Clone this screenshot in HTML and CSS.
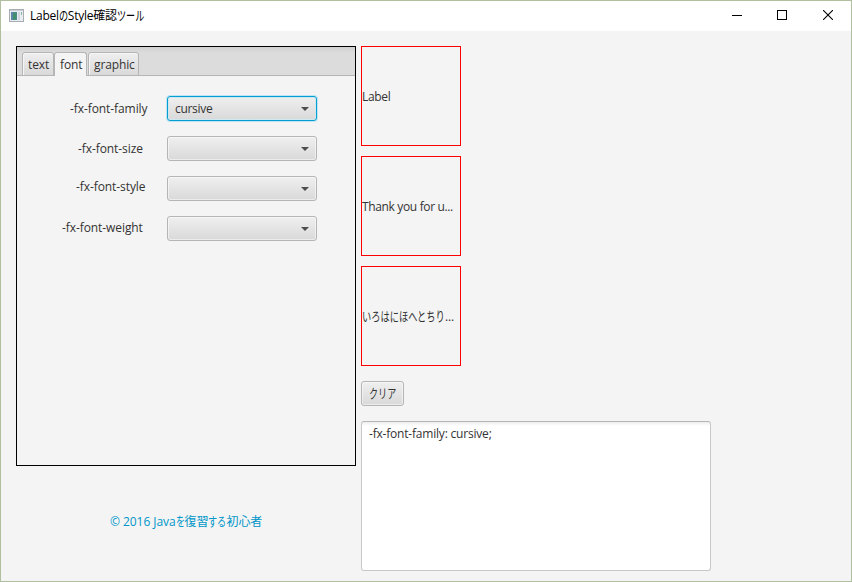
FILE: index.html
```html
<!DOCTYPE html>
<html lang="ja">
<head>
    <meta charset="UTF-8">
    <title>LabelのStyle確認ツール</title>
    <link rel="stylesheet" href="styles.css">
</head>
<body>
    <div class="window">
        <header class="titlebar">
            <svg class="app-icon" width="15" height="13" viewBox="0 0 15 13">
                <rect x="0.5" y="0.5" width="14" height="12" fill="#e9edf2" stroke="#a9adb3"/>
                <rect x="1" y="1" width="13" height="1" fill="#c9ced6"/>
                <rect x="2" y="3" width="6" height="8" fill="#4a8a85"/>
                <rect x="2" y="3" width="2" height="8" fill="#5b86a8"/>
                <rect x="4" y="5" width="3" height="5" fill="#3f8f6c"/>
                <rect x="9" y="3" width="2" height="8" fill="#cfd6de"/>
                <rect x="12" y="3" width="1" height="3" fill="#8fb5a5"/>
            </svg>
            <h1 class="title">Label<span class="kana k1">の</span>Style確認<span class="kana k3">ツール</span></h1>
            <div class="controls">
                <svg width="10" height="10" viewBox="0 0 10 10"><path d="M0 5.5H10" stroke="#000"/></svg>
                <svg width="10" height="10" viewBox="0 0 10 10"><rect x="0.5" y="0.5" width="9" height="9" fill="none" stroke="#000"/></svg>
                <svg width="10" height="10" viewBox="0 0 10 10"><path d="M0 0L10 10M10 0L0 10" stroke="#000" stroke-width="1.1"/></svg>
            </div>
        </header>
        <main class="content">
            <section class="left">
                <div class="panel">
                    <nav class="tabs">
                        <div class="tab tab-text"><span>text</span></div>
                        <div class="tab tab-font active"><span>font</span></div>
                        <div class="tab tab-graphic"><span>graphic</span></div>
                    </nav>
                    <div class="form">
                        <div class="row family">
                            <label>-fx-font-family</label>
                            <div class="combo focused"><span>cursive</span><i class="arrow"></i></div>
                        </div>
                        <div class="row size">
                            <label>-fx-font-size</label>
                            <div class="combo"><i class="arrow"></i></div>
                        </div>
                        <div class="row style">
                            <label>-fx-font-style</label>
                            <div class="combo"><i class="arrow"></i></div>
                        </div>
                        <div class="row weight">
                            <label>-fx-font-weight</label>
                            <div class="combo"><i class="arrow"></i></div>
                        </div>
                    </div>
                </div>
                <a class="copyright">© 2016 Java<span class="kana k1">を</span>復習<span class="kana k2">する</span>初心者</a>
            </section>
            <section class="right">
                <div class="preview label-box">Label</div>
                <div class="preview thanks-box">Thank you for u...</div>
                <div class="preview iroha-box"><span class="kana k9">いろはにほへとちり</span>...</div>
                <button class="clear"><span class="kana k3">クリア</span></button>
                <div class="output">-fx-font-family: cursive;</div>
            </section>
        </main>
    </div>
</body>
</html>
```
FILE: styles.css
```css
* {
    box-sizing: border-box;
}
body {
    margin: 0;
    font-family: "Open Sans", "Noto Sans CJK JP", sans-serif;
    font-size: 12px;
    line-height: 16px;
    letter-spacing: -0.12px;
    color: #333;
}
.window {
    width: 852px;
    height: 582px;
    border: 1px solid #b0bf9e;
    background: #f4f4f4;
    overflow: hidden;
}
/* kana are set narrow, kanji keep the full width */
.kana {
    display: inline-block;
    font-size: 13px;
    letter-spacing: 0;
    line-height: 16px;
    vertical-align: bottom;
    white-space: nowrap;
    transform: translateY(-1px) scaleX(0.7);
    transform-origin: left;
}
.k1 {
    width: 9px;
}
.k2 {
    width: 18px;
}
.k3 {
    width: 27px;
}
.k9 {
    width: 83px;
    transform: translateY(-1px) scaleX(0.71);
}
.titlebar {
    display: flex;
    align-items: center;
    height: 30px;
    padding: 0 18px 2px 8px;
    background: #fff;
    color: #000;
}
.title {
    margin: 2px 0 0 6px;
    font-size: 12px;
    line-height: 16px;
    font-weight: normal;
    letter-spacing: -0.25px;
    white-space: nowrap;
}
.controls {
    display: flex;
    gap: 36px;
    margin-left: auto;
}
.controls svg {
    display: block;
}
.controls svg:first-child {
    margin-right: -1px;
}
.content {
    display: flex;
    gap: 5px;
    padding: 15px;
}
.left {
    width: 340px;
}
.panel {
    height: 420px;
    border: 1px solid #000;
}
.tabs {
    display: flex;
    align-items: flex-end;
    height: 29px;
    padding-left: 5px;
    background: linear-gradient(#d0d0d0, #dcdcdc 6px);
    box-shadow: inset 0 -1px #b5b5b5;
}
.tab {
    display: flex;
    height: 24px;
    padding: 4px 0 0 5px;
    border: 1px solid #b5b5b5;
    border-radius: 3px 3px 0 0;
    background: linear-gradient(#efefef, #d9d9d9);
    box-shadow: inset 1px 1px #f6f6f6;
    white-space: nowrap;
}
.tab-text {
    width: 32px;
}
.tab-font {
    width: 33px;
}
.tab-graphic {
    width: 51px;
    margin-left: 1px;
}
.tab.active {
    border-bottom: 0;
    background: #f4f4f4;
}
.form {
    display: flex;
    flex-direction: column;
    gap: 15px;
    padding-top: 20px;
}
.row {
    display: flex;
    height: 25px;
}
.row label {
    width: 150px;
    padding-top: 5px;
    letter-spacing: -0.08px;
    white-space: nowrap;
}
.family label {
    padding-left: 53px;
}
.size label {
    padding-left: 61px;
}
.style label {
    padding-top: 3px;
    padding-left: 59px;
}
.weight label {
    padding-top: 4px;
    padding-left: 45px;
}
.combo {
    display: flex;
    align-items: center;
    width: 150px;
    padding: 0 7px;
    border: 1px solid #b5b5b5;
    border-radius: 3px;
    background: linear-gradient(#efefef, #d9d9d9);
    box-shadow: inset 0 0 0 1px rgba(255, 255, 255, 0.5);
}
.combo.focused {
    border-color: #039ed3;
    box-shadow: 0 0 0 1px #bfe5f3, inset 0 0 0 1px #cfe7ef;
}
.combo span {
    padding-top: 1px;
    letter-spacing: -0.3px;
}
.arrow {
    margin-left: auto;
    border: 4px solid transparent;
    border-top-color: #4d4d4d;
    border-bottom: 0;
}
.copyright {
    display: block;
    margin-top: 48px;
    padding-left: 94px;
    color: #0096c9;
    letter-spacing: -0.06px;
    white-space: nowrap;
}
.right {
    display: flex;
    flex-direction: column;
    width: 350px;
}
.preview {
    display: flex;
    align-items: center;
    width: 100px;
    height: 100px;
    margin-bottom: 10px;
    padding-top: 2px;
    border: 1px solid #f00;
    white-space: nowrap;
}
.label-box {
    letter-spacing: -0.3px;
}
.thanks-box {
    letter-spacing: -0.35px;
}
.clear {
    width: 43px;
    height: 25px;
    margin: 5px 0 15px;
    padding: 0 0 0 7px;
    border: 1px solid #b5b5b5;
    border-radius: 3px;
    background: linear-gradient(#efefef, #d9d9d9);
    box-shadow: inset 0 0 0 1px rgba(255, 255, 255, 0.5);
    color: #333;
    font: inherit;
    text-align: left;
}
.output {
    height: 150px;
    padding: 4px 7px;
    border: 1px solid #c8c8c8;
    border-top-color: #b5b5b5;
    border-radius: 3px;
    background: linear-gradient(#ededed, #fff 4px);
    letter-spacing: -0.2px;
}
```
